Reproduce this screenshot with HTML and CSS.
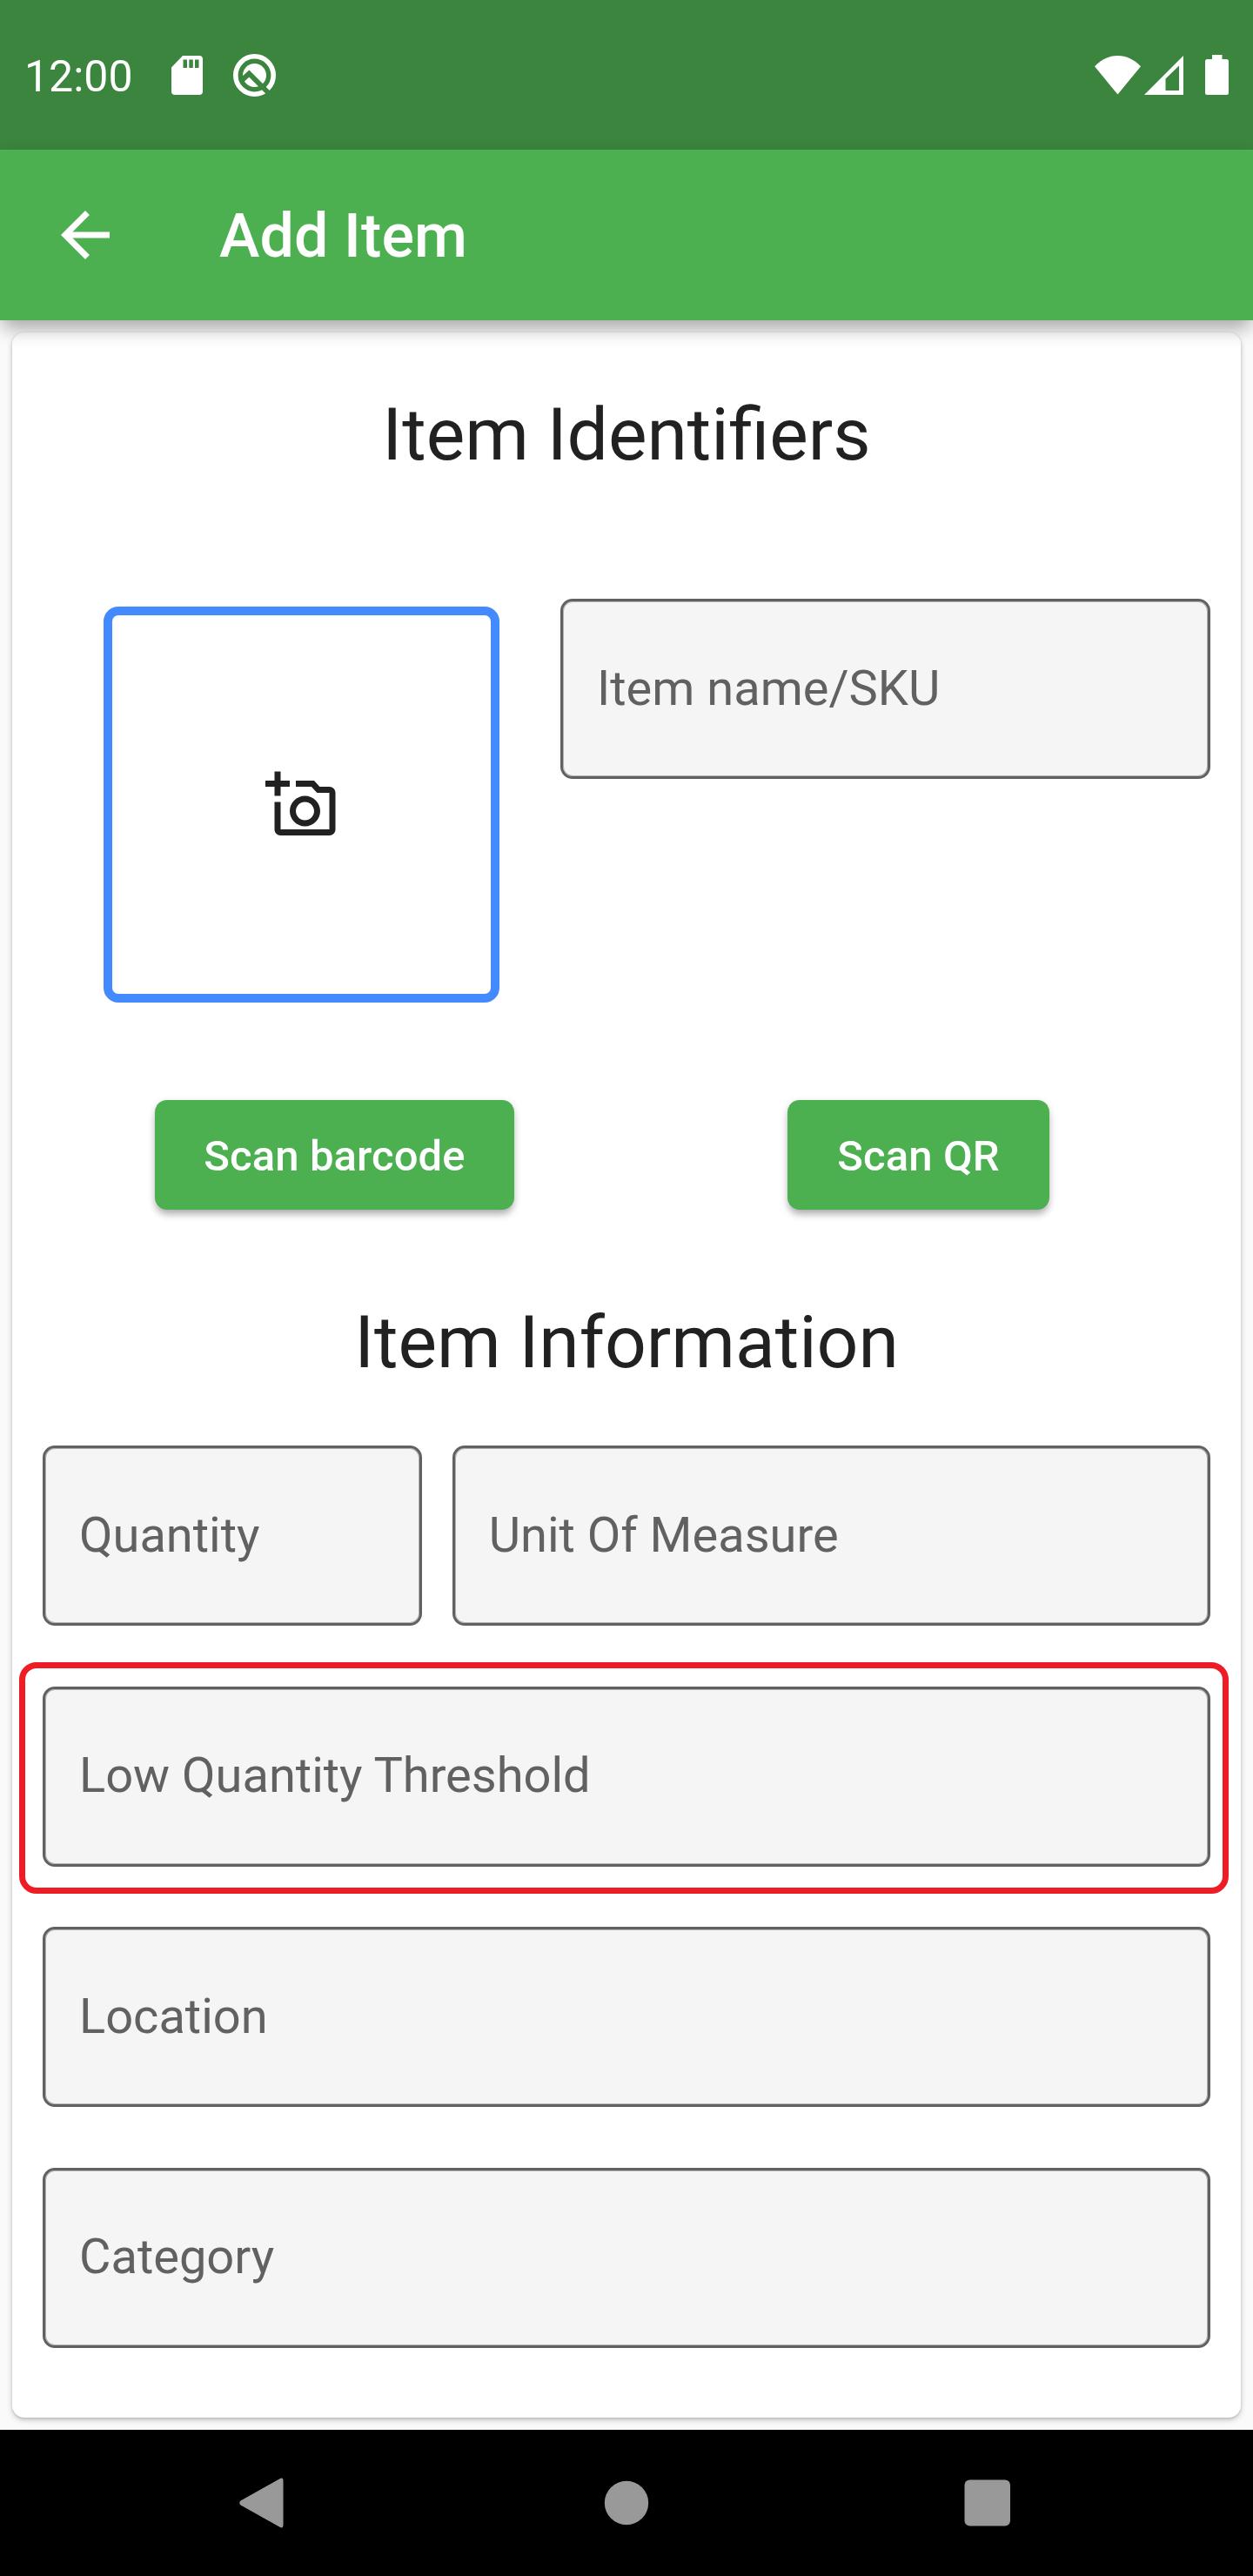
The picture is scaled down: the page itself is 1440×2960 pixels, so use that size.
FILE: index.html
```html
<!DOCTYPE html>
<html lang="en">
<head>
    <meta charset="UTF-8">
    <meta name="viewport" content="width=device-width, initial-scale=1.0">
    <title>Add Item</title>
    <link rel="stylesheet" href="styles.css">
</head>
<body>

<div class="status-bar">
    <span class="clock">12:00</span>
    <svg class="sd-icon" viewBox="0 0 36 45">
        <path fill="#fff" fill-rule="evenodd" d="M13 0H32a4 4 0 0 1 4 4V41a4 4 0 0 1-4 4H4a4 4 0 0 1-4-4V13.500zM13.500 4.500v9.500h4.500v-9.500zM20.300 4.500v9.500h4.500v-9.500zM27 4.500v9.500h4.500v-9.500z"/>
    </svg>
    <svg class="q-icon" viewBox="0 0 49 49">
        <circle cx="24.500" cy="24.500" r="21.700" fill="none" stroke="#fff" stroke-width="5.600"/>
        <circle cx="24.500" cy="24.500" r="13.500" fill="#fff"/>
        <path d="M8 32l10.300-9.500L44 48.200" fill="none" stroke="#3b853e" stroke-width="5.800"/>
    </svg>
    <div class="status-right">
        <svg class="wifi-icon" viewBox="0 0 53 45">
            <path fill="#fff" d="M0 12.300C7.500 4.500 16.500 0 26.500 0S45.500 4.500 53 12.300L26.500 44.500z"/>
        </svg>
        <svg class="signal-icon" viewBox="0 0 45 45">
            <path fill="#fff" fill-rule="evenodd" d="M0 45L45 0v45zM24.500 26.500V40H40V11.500z"/>
        </svg>
        <svg class="battery-icon" viewBox="0 0 27 46">
            <path fill="#fff" d="M8 0h11.500v5H24.500A2.500 2.500 0 0 1 27 7.500v36a2.500 2.500 0 0 1-2.500 2.500h-22A2.500 2.500 0 0 1 0 43.500v-36A2.500 2.500 0 0 1 2.500 5H8z"/>
        </svg>
    </div>
</div>

<div class="app-bar">
    <svg class="back-icon" viewBox="0 0 24 24">
        <path fill="#fff" d="M20 11H7.830l5.590-5.590L12 4l-8 8 8 8 1.410-1.410L7.830 13H20v-2z"/>
    </svg>
    <span class="app-title">Add Item</span>
</div>

<div class="content">
    <div class="card">
        <h2>Item Identifiers</h2>

        <div class="identifiers">
            <div class="photo-box">
                <svg class="photo-icon" viewBox="0 0 24 24">
                    <path fill="#212121" d="M21 6h-3.170L16 4h-6v2h5.120l1.830 2H21v12H5v-9H3v9c0 1.100.9 2 2 2h16c1.100 0 2-.9 2-2V8c0-1.100-.9-2-2-2zM8 14c0 2.760 2.240 5 5 5s5-2.240 5-5-2.240-5-5-5-5 2.240-5 5zm5-3c1.650 0 3 1.350 3 3s-1.350 3-3 3-3-1.350-3-3 1.350-3 3-3zM5 6h3V4H5V1H3v3H0v2h3v3h2z"/>
                </svg>
            </div>
            <div class="field name-field">Item name/SKU</div>
        </div>

        <div class="scan-buttons">
            <button class="btn barcode-btn">Scan barcode</button>
            <button class="btn qr-btn">Scan QR</button>
        </div>

        <h2 class="info-heading">Item Information</h2>

        <div class="fields">
            <div class="field-row">
                <div class="field">Quantity</div>
                <div class="field">Unit Of Measure</div>
            </div>
            <div class="field highlight">Low Quantity Threshold</div>
            <div class="field">Location</div>
            <div class="field">Category</div>
        </div>
    </div>
</div>

<div class="nav-bar">
    <svg class="nav-icon" viewBox="0 0 60 60">
        <path fill="#999" d="M1.500 27.500L46.500 2.200Q50.500 0 50.500 5V55Q50.500 60 46.500 57.800L1.500 32.500Q-1 30 1.500 27.500z"/>
    </svg>
    <svg class="nav-icon" viewBox="0 0 60 60">
        <circle cx="30" cy="30" r="25.200" fill="#999"/>
    </svg>
    <svg class="nav-icon" viewBox="0 0 60 60">
        <rect x="3.500" y="3.500" width="52.500" height="53" rx="6" fill="#999"/>
    </svg>
</div>

</body>
</html>
```

FILE: styles.css
```css
* {
    box-sizing: border-box;
}
body {
    margin: 0;
    width: 1440px;
    height: 2960px;
    display: flex;
    flex-direction: column;
    font-family: Roboto, sans-serif;
    background: #fafafa;
    overflow: hidden;
}
svg {
    display: block;
    flex: none;
}
.status-bar {
    height: 172px;
    padding: 0 28px;
    display: flex;
    align-items: center;
    background: #3b853e;
    color: #fff;
}
.clock {
    width: 169px;
    font-size: 50px;
    line-height: 60px;
    padding-top: 4px;
}
.sd-icon {
    width: 36px;
    height: 45px;
}
.q-icon {
    width: 49px;
    height: 49px;
    margin-left: 35px;
}
.status-right {
    margin-left: auto;
    display: flex;
    align-items: center;
}
.wifi-icon {
    width: 53px;
    height: 45px;
}
.signal-icon {
    width: 45px;
    height: 45px;
    margin-left: 4px;
}
.battery-icon {
    width: 27px;
    height: 46px;
    margin-left: 25px;
}
.app-bar {
    position: relative;
    z-index: 1;
    height: 196px;
    padding-left: 56px;
    display: flex;
    align-items: center;
    gap: 112px;
    background: #4caf50;
    color: #fff;
    box-shadow: 0 14px 20px -4px rgba(0, 0, 0, 0.28), 0 4px 20px rgba(0, 0, 0, 0.08);
}
.back-icon {
    width: 84px;
    height: 84px;
}
.app-title {
    padding-top: 2px;
    font-size: 70px;
    font-weight: 500;
    line-height: 82px;
    letter-spacing: 0.1px;
}
.content {
    height: 2424px;
    padding: 14px;
}
.card {
    height: 2396px;
    padding: 69px 35px 0;
    background: #fff;
    border-radius: 14px;
    box-shadow: 0 3px 6px rgba(0, 0, 0, 0.2), 0 1px 3px rgba(0, 0, 0, 0.14);
}
h2 {
    margin: 0;
    font-size: 84px;
    font-weight: 400;
    line-height: 98px;
    text-align: center;
    color: #212121;
}
.identifiers {
    margin-top: 139px;
    padding-left: 70px;
    display: flex;
    align-items: flex-start;
    gap: 70px;
}
.photo-box {
    width: 455px;
    height: 455px;
    margin-top: 9px;
    flex: none;
    display: flex;
    align-items: center;
    justify-content: center;
    border: 10px solid #448aff;
    border-radius: 17px;
}
.photo-icon {
    width: 84px;
    height: 84px;
}
.field {
    height: 207px;
    padding: 0 0 2px 39px;
    display: flex;
    align-items: center;
    flex: none;
    border: 3px solid #616161;
    border-radius: 14px;
    background: #f5f5f5;
    box-shadow: inset 0 0 0 1px #b0b0b0;
    color: #616161;
    font-size: 56px;
    line-height: 66px;
}
.name-field {
    flex: 1;
}
.scan-buttons {
    margin-top: 112px;
    padding-left: 129px;
    display: flex;
    gap: 314px;
}
.btn {
    height: 126px;
    padding: 2px 0 0;
    border: none;
    border-radius: 14px;
    background: #4caf50;
    color: #fff;
    font-family: inherit;
    font-size: 49px;
    font-weight: 500;
    letter-spacing: 0.1px;
    box-shadow: 0 7px 10px -2px rgba(0, 0, 0, 0.28), 0 2px 10px rgba(0, 0, 0, 0.12);
}
.barcode-btn {
    width: 413px;
}
.qr-btn {
    width: 301px;
}
.info-heading {
    margin-top: 104px;
}
.fields {
    margin-top: 69px;
    display: flex;
    flex-direction: column;
    gap: 69.5px;
}
.field-row {
    display: grid;
    grid-template-columns: 1fr 2fr;
    gap: 35px;
}
.highlight {
    position: relative;
}
.highlight::after {
    content: "";
    position: absolute;
    top: -31px;
    right: -24px;
    bottom: -34px;
    left: -30px;
    border: 7px solid #ee1c25;
    border-radius: 20px;
}
.nav-bar {
    height: 168px;
    padding: 0 275px;
    display: flex;
    align-items: center;
    justify-content: space-between;
    background: #000;
}
.nav-icon {
    width: 60px;
    height: 60px;
}
```
